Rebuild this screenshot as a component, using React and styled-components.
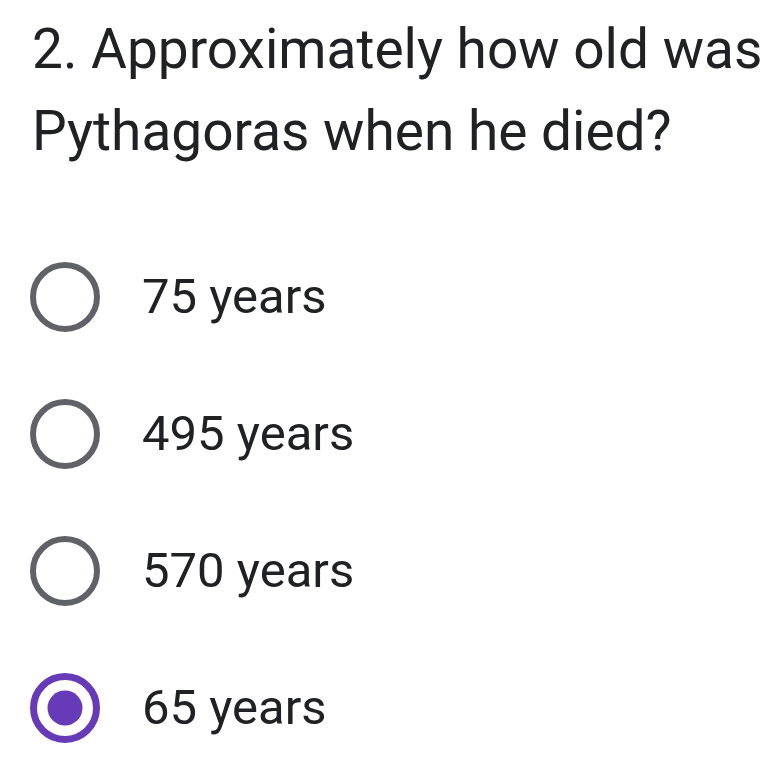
import styled, { createGlobalStyle } from "styled-components";

const GlobalStyle = createGlobalStyle`
  html, body {
    margin: 0;
    padding: 0;
    background: #ffffff;
  }
  body {
    font-family: Roboto, "Noto Sans", sans-serif;
  }
`;

const Container = styled.div`
  width: 772px;
  height: 773px;
  padding: 8px 0 0 32px;
  box-sizing: border-box;
  overflow: hidden;
`;

const Question = styled.h1`
  margin: 0 0 56px;
  font-size: 55px;
  font-weight: 400;
  line-height: 82px;
  color: #202124;
  white-space: nowrap;
`;

const Options = styled.div`
  display: flex;
  flex-direction: column;
`;

const Row = styled.label`
  display: flex;
  align-items: center;
  gap: 42px;
  height: 137px;
  margin-left: -2px;
  cursor: pointer;
`;

const Label = styled.span`
  font-size: 49px;
  color: #202124;
`;

const Radio = ({ checked }) => (
  <svg width="70" height="70" viewBox="0 0 70 70">
    {checked ? (
      <>
        <circle cx="35" cy="35" r="31.5" fill="none" stroke="#673ab7" strokeWidth="7" />
        <circle cx="35" cy="35" r="17.5" fill="#673ab7" />
      </>
    ) : (
      <circle cx="35" cy="35" r="32" fill="none" stroke="#5f6368" strokeWidth="6" />
    )}
  </svg>
);

const answers = [
  { text: "75 years", checked: false },
  { text: "495 years", checked: false },
  { text: "570 years", checked: false },
  { text: "65 years", checked: true },
];

const App = () => {
  return (
    <Container>
      <GlobalStyle />
      <Question>
        2. Approximately how old was
        <br />
        Pythagoras when he died?
      </Question>
      <Options>
        {answers.map((a) => (
          <Row key={a.text}>
            <Radio checked={a.checked} />
            <Label>{a.text}</Label>
          </Row>
        ))}
      </Options>
    </Container>
  );
};

export default App;
